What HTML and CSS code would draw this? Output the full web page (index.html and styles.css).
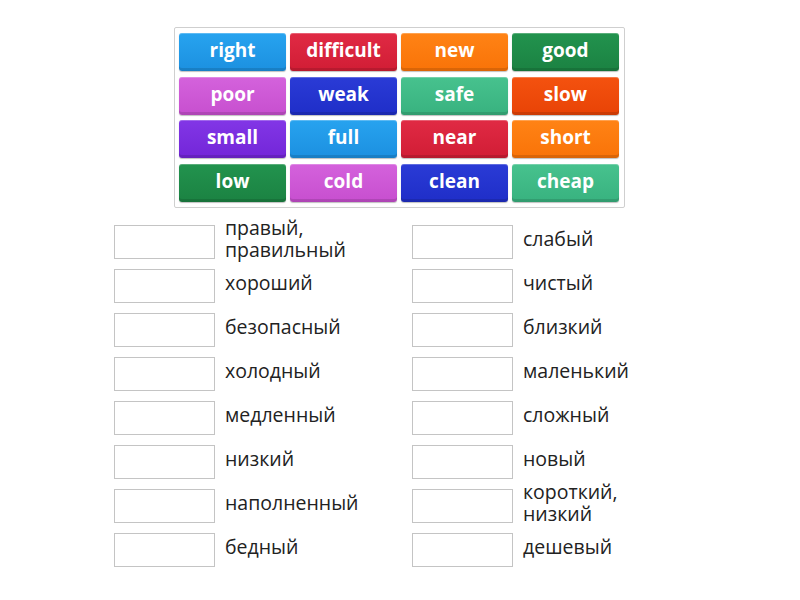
FILE: index.html
```html
<!DOCTYPE html>
<html>
<head>
<meta charset="utf-8">
<link rel="stylesheet" href="styles.css">
</head>
<body>
<div class="page">
  <div class="bank">
    <div class="tile blue">right</div>
    <div class="tile red">difficult</div>
    <div class="tile orange">new</div>
    <div class="tile green">good</div>
    <div class="tile pink">poor</div>
    <div class="tile navy">weak</div>
    <div class="tile teal">safe</div>
    <div class="tile vermil">slow</div>
    <div class="tile purple">small</div>
    <div class="tile blue">full</div>
    <div class="tile red">near</div>
    <div class="tile orange">short</div>
    <div class="tile green">low</div>
    <div class="tile pink">cold</div>
    <div class="tile navy">clean</div>
    <div class="tile teal">cheap</div>
  </div>
  <div class="matches">
    <div class="col">
      <div class="row"><div class="box"></div><div class="label">правый,<br>правильный</div></div>
      <div class="row"><div class="box"></div><div class="label">хороший</div></div>
      <div class="row"><div class="box"></div><div class="label">безопасный</div></div>
      <div class="row"><div class="box"></div><div class="label">холодный</div></div>
      <div class="row"><div class="box"></div><div class="label">медленный</div></div>
      <div class="row"><div class="box"></div><div class="label">низкий</div></div>
      <div class="row"><div class="box"></div><div class="label">наполненный</div></div>
      <div class="row"><div class="box"></div><div class="label">бедный</div></div>
    </div>
    <div class="col">
      <div class="row"><div class="box"></div><div class="label">слабый</div></div>
      <div class="row"><div class="box"></div><div class="label">чистый</div></div>
      <div class="row"><div class="box"></div><div class="label">близкий</div></div>
      <div class="row"><div class="box"></div><div class="label">маленький</div></div>
      <div class="row"><div class="box"></div><div class="label">сложный</div></div>
      <div class="row"><div class="box"></div><div class="label">новый</div></div>
      <div class="row"><div class="box"></div><div class="label">короткий,<br>низкий</div></div>
      <div class="row"><div class="box"></div><div class="label">дешевый</div></div>
    </div>
  </div>
</div>
</body>
</html>
```
FILE: styles.css
```css
html, body {
  margin: 0;
  padding: 0;
  background: #ffffff;
  font-family: "Open Sans", "Liberation Sans", sans-serif;
}
.page {
  width: 800px;
  height: 600px;
  padding-top: 27px;
  box-sizing: border-box;
}
.bank {
  width: 440px;
  margin-left: 174px;
  padding: 5px 5px 5px 4px;
  border: 1px solid #cfcfcf;
  border-radius: 2px;
  display: grid;
  grid-template-columns: repeat(4, 107px);
  grid-auto-rows: 38px;
  column-gap: 4px;
  row-gap: 5.6px;
  box-sizing: content-box;
}
.tile {
  border-radius: 3px;
  color: #ffffff;
  font-weight: 700;
  font-size: 19px;
  display: flex;
  align-items: center;
  justify-content: center;
  padding-bottom: 4px;
  box-sizing: border-box;
  box-shadow: inset 0 1px 0 rgba(255,255,255,0.25), inset 0 -3px 0 rgba(0,0,0,0.12), 0 1px 1px rgba(0,0,0,0.25);
}
.blue   { background: linear-gradient(#27a3ef, #1c90e0); }
.red    { background: linear-gradient(#e02a44, #d11d35); }
.orange { background: linear-gradient(#ff8315, #f97308); }
.green  { background: linear-gradient(#22934e, #1b8242); }
.pink   { background: linear-gradient(#d462dc, #c74fcf); }
.navy   { background: linear-gradient(#2a3bd6, #1f2ec8); }
.teal   { background: linear-gradient(#47c28e, #38b27f); }
.vermil { background: linear-gradient(#f4520f, #e84306); }
.purple { background: linear-gradient(#8236e6, #7326d8); }

.matches {
  display: flex;
  margin-left: 114px;
  margin-top: 17px;
}
.col {
  width: 298px;
  display: flex;
  flex-direction: column;
}
.row {
  height: 44px;
  display: flex;
  align-items: flex-start;
}
.box {
  width: 99px;
  height: 32px;
  border: 1px solid #c4c4c4;
  background: #fff;
  flex: none;
}
.label {
  margin-left: 10px;
  height: 34px;
  padding-bottom: 6px;
  box-sizing: border-box;
  display: flex;
  align-items: center;
  font-size: 19.5px;
  line-height: 22px;
  color: #222;
}
```
